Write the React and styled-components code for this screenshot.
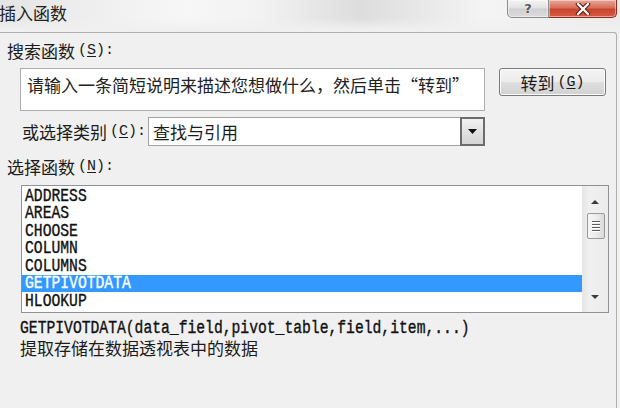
import React from "react";
import styled, { createGlobalStyle } from "styled-components";

const CJK = `"Noto Sans CJK SC", "Noto Sans", sans-serif`;
const MONO = `"Liberation Mono", "DejaVu Sans Mono", monospace`;

const GlobalStyle = createGlobalStyle`
  html, body { margin: 0; padding: 0; background: #f0f0f0; }
  body { font-family: ${CJK}; color: #1c1c1c; }
  * { box-sizing: border-box; }
`;

const Window = styled.div`
  width: 620px;
  height: 408px;
  overflow: hidden;
  display: flex;
  flex-direction: column;
  background: #f0f0f0;
  font-family: ${CJK};
`;

const TitleBar = styled.div`
  height: 30px;
  flex: none;
  display: flex;
  align-items: flex-start;
  justify-content: space-between;
  background:
    linear-gradient(180deg, rgba(240, 240, 240, 0) 60%, #f0f0f0 100%),
    linear-gradient(90deg, #e4e4e4 0%, #ededed 12%, #f7f7f7 30%, #f2f2f2 42%, #dddddd 58%, #e8e8e8 68%, #f4f4f4 78%, #ebebeb 100%);
`;

const Title = styled.div`
  height: 24px;
  padding-top: 3px;
  margin-left: -1px;
  font-size: 17px;
  line-height: 20px;
  color: #222;
`;

const Captions = styled.div`
  display: flex;
  margin-right: 3px;
`;

const CaptionButton = styled.div`
  width: ${(p) => p.$w}px;
  height: 18px;
  display: flex;
  align-items: center;
  justify-content: center;
  border: 1px solid ${(p) => (p.$danger ? "#8e2c22" : "#8c8c8c")};
  border-top: none;
  border-radius: ${(p) => (p.$danger ? "0 0 5px 0" : "0 0 0 5px")};
  background: ${(p) =>
    p.$danger
      ? "linear-gradient(180deg, #e9a595 0%, #d7705c 45%, #c8442f 55%, #d85a40 100%)"
      : "linear-gradient(180deg, #f4f4f4 0%, #e2e2e2 45%, #d0d0d0 55%, #dcdcdc 100%)"};
  box-shadow: inset 0 0 0 1px rgba(255, 255, 255, 0.45);
  font-family: "DejaVu Sans", sans-serif;
  font-weight: bold;
  font-size: 13px;
  color: #5a5a5a;
  text-shadow: 0 0 2px #fff;
  & + & { border-left: none; }
`;

const Body = styled.div`
  flex: 1;
  display: flex;
  padding: 2px 3px 0 0;
`;

const GroupBox = styled.div`
  flex: 1;
  display: flex;
  flex-direction: column;
  border-top: 1px solid #b0b0b0;
  border-right: 1px solid #b0b0b0;
  border-top-right-radius: 3px;
`;

const FieldLabel = styled.div`
  height: 20px;
  display: flex;
  align-items: center;
  font-size: 17px;
  margin: ${(p) => p.$top}px 0 0 ${(p) => p.$indent}px;
  white-space: nowrap;
  color: #1c1c1c;
`;

const AccelText = styled.span`
  font-family: ${MONO};
  font-size: 15px;
  margin-left: 3px;
  & u { text-decoration-thickness: 1px; text-underline-offset: 2px; }
`;

const Accel = ({ k, colon = true }) => (
  <AccelText>
    (<u>{k}</u>){colon ? ":" : ""}
  </AccelText>
);

const SearchRow = styled.div`
  display: flex;
  align-items: flex-start;
  margin: 8px 0 0 20px;
`;

const SearchBox = styled.div`
  width: 465px;
  height: 43px;
  border: 1px solid #abadb3;
  background: #fff;
  padding: 5px 6px;
  font-size: 17px;
  line-height: 22px;
  white-space: nowrap;
  overflow: hidden;
  color: #222;
`;

const GoButton = styled.div`
  margin-left: 14px;
  width: 107px;
  height: 28px;
  display: flex;
  align-items: center;
  justify-content: center;
  border: 1px solid #7a7a7a;
  border-radius: 3px;
  background: linear-gradient(180deg, #f4f4f4 0%, #ececec 48%, #dedede 52%, #d2d2d2 100%);
  box-shadow: inset 0 0 0 1px #fbfbfb;
  font-size: 17px;
  color: #1c1c1c;
`;

const CategoryRow = styled.div`
  display: flex;
  align-items: center;
  margin-top: 6px;
  height: 29px;
`;

const CategoryLabel = styled.div`
  width: 126px;
  margin-left: 22px;
  display: flex;
  align-items: center;
  font-size: 17px;
  white-space: nowrap;
`;

const Select = styled.div`
  width: 337px;
  height: 29px;
  display: flex;
  align-items: center;
  border: 1px solid #a2a2a2;
  background: #fff;
`;

const SelectValue = styled.div`
  flex: 1;
  padding-left: 4px;
  font-size: 17px;
  color: #1c1c1c;
`;

const DropButton = styled.div`
  width: 25px;
  height: 29px;
  margin: -1px -1px -1px 0;
  display: flex;
  align-items: center;
  justify-content: center;
  border: 2px solid #6c6c6c;
  background: linear-gradient(180deg, #f2f2f2 0%, #e2e2e2 50%, #d4d4d4 100%);
`;

const ListBox = styled.div`
  margin: 9px 0 0 21px;
  width: 588px;
  height: 128px;
  flex: none;
  display: flex;
  border: 1px solid #8e9196;
  background: #fff;
  overflow: hidden;
`;

const Items = styled.div`
  flex: 1;
  padding-top: 1px;
`;

const Item = styled.div`
  height: 17.5px;
  display: flex;
  align-items: center;
  padding-left: 3px;
  font-family: ${MONO};
  font-size: 14.7px;
  color: ${(p) => (p.$selected ? "#fff" : "#111")};
  background: ${(p) => (p.$selected ? "#3399ff" : "transparent")};
`;

const TallText = styled.span`
  display: inline-block;
  transform: scaleY(1.2);
  -webkit-text-stroke: 0.3px currentColor;
`;

const ScrollBar = styled.div`
  width: 26px;
  display: flex;
  flex-direction: column;
  align-items: center;
  background: linear-gradient(90deg, #e6e6e6 0%, #f0f0f0 30%, #ececec 100%);
`;

const ArrowCell = styled.div`
  height: 27px;
  width: 100%;
  display: flex;
  align-items: center;
  justify-content: center;
  padding: ${(p) => (p.$down ? "0 0 4px" : "4px 0 0")};
`;

const Thumb = styled.div`
  width: 18px;
  height: 26px;
  margin-left: 1px;
  display: flex;
  flex-direction: column;
  align-items: center;
  justify-content: center;
  gap: 2px;
  border: 1px solid #9a9a9a;
  border-radius: 2px;
  background: linear-gradient(90deg, #f6f6f6 0%, #ececec 50%, #dadada 100%);
`;

const Grip = styled.div`
  width: 8px;
  height: 1px;
  background: #5c5c5c;
  box-shadow: 0 1px 0 #fff;
`;

const Track = styled.div`
  flex: 1;
`;

const Signature = styled.div`
  height: 19px;
  margin: 5px 0 0 20px;
  display: flex;
  align-items: center;
  font-family: ${MONO};
  font-size: 14.7px;
  color: #111;
  white-space: nowrap;
`;

const Summary = styled.div`
  height: 22px;
  margin-left: 20px;
  font-size: 17px;
  line-height: 22px;
  color: #1c1c1c;
`;

const Triangle = ({ up, w = 8, h = 4, color = "#111" }) => (
  <svg width={w} height={h} viewBox={`0 0 ${w} ${h}`}>
    <polygon
      points={up ? `0,${h} ${w},${h} ${w / 2},0` : `0,0 ${w},0 ${w / 2},${h}`}
      fill={color}
    />
  </svg>
);

const CloseGlyph = () => (
  <svg width="16" height="12" viewBox="0 0 16 12">
    <path d="M3 1 L13 11 M13 1 L3 11" stroke="#5a1a12" strokeWidth="4.4" strokeLinecap="round" />
    <path d="M3 1 L13 11 M13 1 L3 11" stroke="#fff" strokeWidth="2.4" strokeLinecap="round" />
  </svg>
);

const functions = ["ADDRESS", "AREAS", "CHOOSE", "COLUMN", "COLUMNS", "GETPIVOTDATA", "HLOOKUP"];

export default function App() {
  return (
    <Window lang="zh-CN">
      <GlobalStyle />
      <TitleBar>
        <Title>插入函数</Title>
        <Captions>
          <CaptionButton $w={42}>?</CaptionButton>
          <CaptionButton $w={68} $danger>
            <CloseGlyph />
          </CaptionButton>
        </Captions>
      </TitleBar>
      <Body>
        <GroupBox>
          <FieldLabel $top={7} $indent={7}>
            搜索函数<Accel k="S" />
          </FieldLabel>
          <SearchRow>
            <SearchBox>请输入一条简短说明来描述您想做什么，然后单击“转到”</SearchBox>
            <GoButton>
              转到<Accel k="G" colon={false} />
            </GoButton>
          </SearchRow>
          <CategoryRow>
            <CategoryLabel>
              或选择类别<Accel k="C" />
            </CategoryLabel>
            <Select>
              <SelectValue>查找与引用</SelectValue>
              <DropButton>
                <Triangle w={9} h={5} />
              </DropButton>
            </Select>
          </CategoryRow>
          <FieldLabel $top={10} $indent={7}>
            选择函数<Accel k="N" />
          </FieldLabel>
          <ListBox>
            <Items>
              {functions.map((name) => (
                <Item key={name} $selected={name === "GETPIVOTDATA"}>
                  <TallText>{name}</TallText>
                </Item>
              ))}
            </Items>
            <ScrollBar>
              <ArrowCell>
                <Triangle up w={8} h={4} color="#3c3c3c" />
              </ArrowCell>
              <Thumb>
                <Grip />
                <Grip />
                <Grip />
                <Grip />
              </Thumb>
              <Track />
              <ArrowCell $down>
                <Triangle w={8} h={4} color="#3c3c3c" />
              </ArrowCell>
            </ScrollBar>
          </ListBox>
          <Signature>
            <TallText>GETPIVOTDATA(data_field,pivot_table,field,item,...)</TallText>
          </Signature>
          <Summary>提取存储在数据透视表中的数据</Summary>
        </GroupBox>
      </Body>
    </Window>
  );
}
